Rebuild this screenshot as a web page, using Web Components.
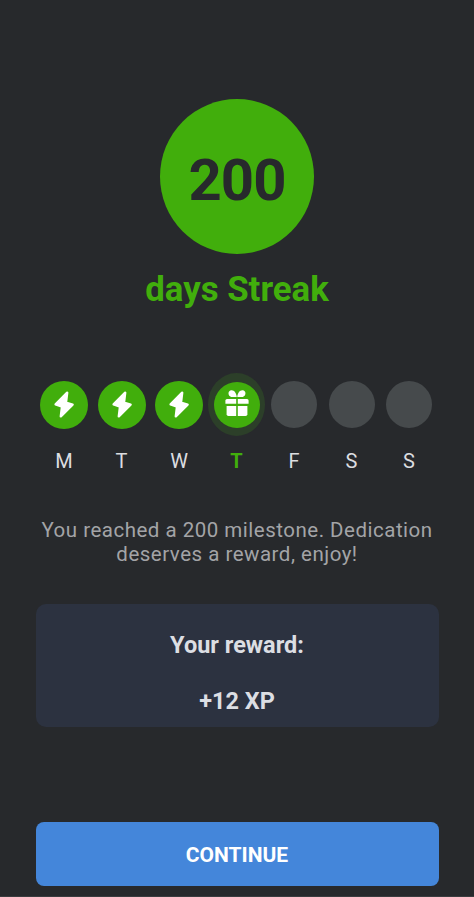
<!DOCTYPE html>
<html lang="en">
<head>
  <meta charset="utf-8">
  <title>Streak</title>
  <style>
    body {
      margin: 0;
      background: #27292c;
      font-family: Roboto, "Liberation Sans", sans-serif;
    }
  </style>
</head>
<body>
  <streak-screen>
    <streak-badge slot="badge" count="200">days Streak</streak-badge>
    <streak-week slot="week">
      <streak-day state="done">M</streak-day>
      <streak-day state="done">T</streak-day>
      <streak-day state="done">W</streak-day>
      <streak-day state="gift">T</streak-day>
      <streak-day>F</streak-day>
      <streak-day>S</streak-day>
      <streak-day>S</streak-day>
    </streak-week>
    <span slot="message">You reached a 200 milestone. Dedication<br>deserves a reward, enjoy!</span>
    <reward-card slot="reward" amount="+12 XP">Your reward:</reward-card>
    <action-button slot="action">CONTINUE</action-button>
  </streak-screen>

  <script>
    class StreakScreen extends HTMLElement {
      constructor() {
        super();
        this.attachShadow({ mode: "open" });
      }

      connectedCallback() {
        this.shadowRoot.innerHTML = `
          <style>
            :host {
              display: flex;
              flex-direction: column;
              box-sizing: border-box;
              height: 897px;
              padding: 99px 35.5px 10.5px;
              border-bottom: 1px solid #3a3c3f;
            }
            .message {
              margin: 45px -20px 0;
              text-align: center;
              font-size: 20.5px;
              line-height: 24px;
              letter-spacing: 0.5px;
              color: #a3a4a7;
            }
            .reward {
              margin-top: 38px;
            }
            .action {
              margin-top: auto;
            }
          </style>
          <slot name="badge"></slot>
          <slot name="week"></slot>
          <div class="message"><slot name="message"></slot></div>
          <div class="reward"><slot name="reward"></slot></div>
          <div class="action"><slot name="action"></slot></div>
        `;
      }
    }

    class StreakBadge extends HTMLElement {
      constructor() {
        super();
        this.attachShadow({ mode: "open" });
      }

      connectedCallback() {
        this.shadowRoot.innerHTML = `
          <style>
            :host {
              display: flex;
              flex-direction: column;
              align-items: center;
              font-weight: bold;
              color: #41ae0c;
            }
            .circle {
              display: flex;
              align-items: center;
              justify-content: center;
              box-sizing: border-box;
              width: 154px;
              height: 155px;
              padding-top: 7px;
              border-radius: 50%;
              background: #41ae0c;
              color: #27292c;
              font-size: 58px;
              line-height: 68px;
              letter-spacing: -1px;
            }
            .label {
              margin-top: 14px;
              font-size: 34.8px;
              line-height: 42px;
            }
          </style>
          <div class="circle"><span>${this.getAttribute("count")}</span></div>
          <div class="label"><slot></slot></div>
        `;
      }
    }

    class StreakWeek extends HTMLElement {
      constructor() {
        super();
        this.attachShadow({ mode: "open" });
      }

      connectedCallback() {
        this.shadowRoot.innerHTML = `
          <style>
            :host {
              display: grid;
              grid-template-columns: repeat(7, 57.5px);
              justify-content: center;
              margin: 63px 1px 0 0;
            }
          </style>
          <slot></slot>
        `;
      }
    }

    class StreakDay extends HTMLElement {
      constructor() {
        super();
        this.attachShadow({ mode: "open" });
      }

      icon() {
        const state = this.getAttribute("state");
        if (state === "done") {
          return `
            <svg width="48" height="48" viewBox="0 0 48 48">
              <path d="M27.2 11.6 15.6 23.4l6.4 2.2L20.8 35.4 32.6 23.6l-6.6-2z" fill="#fff" stroke="#fff" stroke-width="2.4" stroke-linejoin="round"/>
            </svg>`;
        }
        if (state === "gift") {
          return `
            <svg width="46" height="46" viewBox="0 0 46 46">
              <g fill="#fff">
                <path d="M22.4 15h-5.2c-3.8-1.4-3.4-6.6.2-6.8 3-.2 4.6 2.8 5.4 6.2z"/>
                <path d="M23.6 15h5.2c3.8-1.4 3.4-6.6-.2-6.8-3-.2-4.6 2.8-5.4 6.2z"/>
                <path d="M13 17h9.2v4.8H11.4v-3.2A1.6 1.6 0 0 1 13 17z"/>
                <path d="M23.8 17H33a1.6 1.6 0 0 1 1.6 1.6v3.2H23.8z"/>
                <path d="M12.6 24h9.6v10h-7.8a1.8 1.8 0 0 1-1.8-1.8z"/>
                <path d="M23.8 24h9.6v8.2a1.8 1.8 0 0 1-1.8 1.8h-7.8z"/>
              </g>
            </svg>`;
        }
        return "";
      }

      connectedCallback() {
        this.shadowRoot.innerHTML = `
          <style>
            :host {
              display: flex;
              flex-direction: column;
              align-items: center;
              color: #dcdde0;
            }
            .ring {
              display: flex;
              align-items: center;
              justify-content: center;
              width: 57.5px;
              height: 63px;
              border-radius: 50%;
            }
            .dot {
              width: 46px;
              height: 47px;
              border-radius: 50%;
              background: #464a4c;
            }
            :host([state="done"]) .dot {
              width: 48px;
              height: 48px;
              background: #41ae0c;
            }
            :host([state="gift"]) .dot {
              height: 46px;
              background: #41ae0c;
            }
            :host([state="gift"]) .ring {
              background: #2c3f29;
            }
            svg {
              display: block;
            }
            .name {
              margin-top: 13px;
              font-size: 20px;
              line-height: 24px;
            }
            :host([state="gift"]) .name {
              color: #41ae0c;
              font-weight: bold;
            }
          </style>
          <div class="ring"><div class="dot">${this.icon()}</div></div>
          <div class="name"><slot></slot></div>
        `;
      }
    }

    class RewardCard extends HTMLElement {
      constructor() {
        super();
        this.attachShadow({ mode: "open" });
      }

      connectedCallback() {
        this.shadowRoot.innerHTML = `
          <style>
            :host {
              display: flex;
              flex-direction: column;
              align-items: center;
              gap: 28px;
              box-sizing: border-box;
              height: 123px;
              padding-top: 27px;
              border-radius: 10px;
              background: #2c3240;
              color: #dcdee3;
              font-size: 23.5px;
              font-weight: bold;
              line-height: 28px;
            }
          </style>
          <div><slot></slot></div>
          <div>${this.getAttribute("amount")}</div>
        `;
      }
    }

    class ActionButton extends HTMLElement {
      constructor() {
        super();
        this.attachShadow({ mode: "open" });
      }

      connectedCallback() {
        this.shadowRoot.innerHTML = `
          <style>
            :host {
              display: block;
            }
            button {
              display: block;
              width: 100%;
              height: 63.5px;
              padding: 2px 0 0;
              border: none;
              border-radius: 8px;
              background: #4486da;
              color: #fff;
              font: bold 21px/24px Roboto, "Liberation Sans", sans-serif;
            }
          </style>
          <button type="button"><slot></slot></button>
        `;
      }
    }

    customElements.define("streak-screen", StreakScreen);
    customElements.define("streak-badge", StreakBadge);
    customElements.define("streak-week", StreakWeek);
    customElements.define("streak-day", StreakDay);
    customElements.define("reward-card", RewardCard);
    customElements.define("action-button", ActionButton);
  </script>
</body>
</html>
